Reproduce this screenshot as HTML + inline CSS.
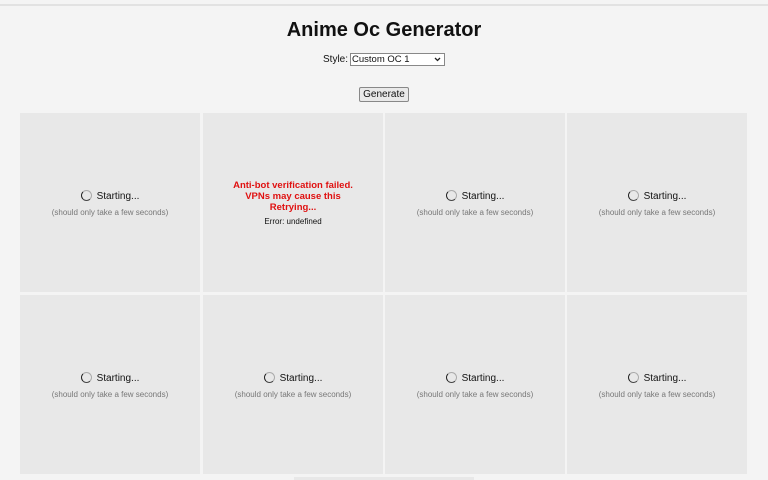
<!DOCTYPE html>
<html><head><style>
html,body{margin:0;padding:0;background:#f4f4f4;width:768px;height:480px;overflow:hidden;font-family:"Liberation Sans",Arial,sans-serif;}
.topline{position:absolute;left:0;top:4px;width:768px;height:2px;background:#e2e2e2;}
h1{position:absolute;left:0;width:768px;top:18px;margin:0;text-align:center;font-size:20px;font-weight:bold;color:#111;line-height:24px;}
.style{position:absolute;left:323px;top:54px;font-size:10px;line-height:12px;color:#111;}
.sel{position:absolute;left:350px;top:53px;width:92px;height:11px;border:1px solid #888;background:#fff;font-size:9.5px;line-height:11px;box-sizing:content-box;padding-left:1px;color:#111;}
.sel svg{position:absolute;right:3px;top:3px;}
.btn{position:absolute;left:359px;top:87px;width:48px;height:13px;border:1px solid #888;border-radius:2px;background:#e9e9e9;font-size:10px;line-height:14px;text-align:center;color:#111;}
.tile{position:absolute;width:180px;height:179px;background:#e8e8e8;}
.st{position:absolute;left:0;width:180px;top:77px;text-align:center;font-size:10px;line-height:13px;color:#111;}
.sp{display:inline-block;width:9px;height:9px;border:1.5px solid #aaa;border-radius:50%;border-left-color:#222;border-bottom-color:#444;vertical-align:-2px;margin-right:5px;}
.sub{position:absolute;left:0;width:180px;top:95px;text-align:center;font-size:8px;color:#777;}
.err{position:absolute;left:0;width:180px;top:67px;text-align:center;font-size:9.5px;line-height:11px;color:#e01010;font-weight:bold;}
.eu{position:absolute;left:0;width:180px;top:104px;text-align:center;font-size:8px;color:#111;}
.bot{position:absolute;left:294px;top:477px;width:180px;height:3px;background:#e8e8e8;}
</style></head><body>
<div class="topline"></div>
<h1>Anime Oc Generator</h1>
<div class="style">Style:</div>
<div class="sel">Custom OC 1<svg width="7" height="5" viewBox="0 0 7 5"><path d="M1 1L3.5 3.5L6 1" stroke="#222" stroke-width="1.3" fill="none"/></svg></div>
<div class="btn">Generate</div>

<div class="tile" style="left:20px;top:113px"><div class="st"><span class="sp"></span>Starting...</div><div class="sub">(should only take a few seconds)</div></div>
<div class="tile" style="left:203px;top:113px"><div class="err">Anti-bot verification failed.<br>VPNs may cause this<br>Retrying...</div><div class="eu">Error: undefined</div></div>
<div class="tile" style="left:385px;top:113px"><div class="st"><span class="sp"></span>Starting...</div><div class="sub">(should only take a few seconds)</div></div>
<div class="tile" style="left:567px;top:113px"><div class="st"><span class="sp"></span>Starting...</div><div class="sub">(should only take a few seconds)</div></div>

<div class="tile" style="left:20px;top:295px"><div class="st"><span class="sp"></span>Starting...</div><div class="sub">(should only take a few seconds)</div></div>
<div class="tile" style="left:203px;top:295px"><div class="st"><span class="sp"></span>Starting...</div><div class="sub">(should only take a few seconds)</div></div>
<div class="tile" style="left:385px;top:295px"><div class="st"><span class="sp"></span>Starting...</div><div class="sub">(should only take a few seconds)</div></div>
<div class="tile" style="left:567px;top:295px"><div class="st"><span class="sp"></span>Starting...</div><div class="sub">(should only take a few seconds)</div></div>
<div class="bot"></div>
</body></html>
